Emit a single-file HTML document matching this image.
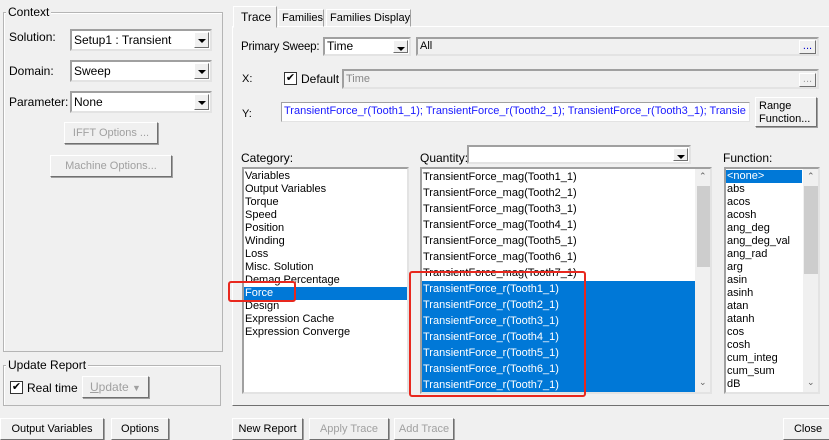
<!DOCTYPE html>
<html><head><style>
*{box-sizing:border-box}
body{margin:0;width:829px;height:429px;overflow:hidden;background:#f0f0f0;font-family:"Liberation Sans",sans-serif;font-size:11px;color:#000;position:relative}
.a{position:absolute;white-space:nowrap}
.grp{position:absolute;border:1px solid #b5b5b5;box-shadow:inset 1px 1px 0 #fff}
.lbl{position:absolute;background:#f0f0f0;padding:0 2px;white-space:nowrap}
.combo{position:absolute;background:#fff;border:2px solid;border-color:#a0a0a0 #e3e3e3 #e3e3e3 #a0a0a0;white-space:nowrap;padding-left:2px;line-height:18px;overflow:hidden}
.arr{position:absolute;right:1px;top:1px;bottom:1px;width:15px;background:#f0f0f0;border:1px solid;border-color:#fff #707070 #707070 #fff}
.arr:after{content:"";position:absolute;left:3px;top:6px;border-left:4px solid transparent;border-right:4px solid transparent;border-top:4px solid #000}
.btn{position:absolute;background:#f0f0f0;border:1px solid;border-color:#fff #707070 #707070 #fff;box-shadow:1px 1px 0 #a0a0a0;text-align:center;white-space:nowrap;line-height:20px}
.dis{color:#a0a0a0}
.list{position:absolute;background:#fff;border:2px solid;border-color:#a0a0a0 #e3e3e3 #e3e3e3 #a0a0a0;overflow:hidden;white-space:nowrap}
.row{height:13px;line-height:13px;padding-left:1px}
.qrow{height:16px;line-height:16px;padding-left:1px}
.sel{background:#0078d7;color:#fff}
.sb{position:absolute;background:#f0f0f0}
.red{position:absolute;border:2px solid #e8281e;border-radius:3px}
.chk{position:absolute;width:13px;height:13px;border:1px solid #333;background:#fff;font-size:11px;line-height:11px;text-align:center}
</style></head><body>
<div class="grp" style="left:3px;top:12px;width:220px;height:340px"></div>
<div class="lbl" style="left:6px;top:5px;font-size:12px">Context</div>
<div class="a" style="left:9px;top:30px;font-size:12px">Solution:</div>
<div class="combo" style="left:70px;top:29px;width:142px;height:22px;font-size:12px">Setup1 : Transient<div class="arr"></div></div>
<div class="a" style="left:9px;top:64px;font-size:12px">Domain:</div>
<div class="combo" style="left:70px;top:60px;width:142px;height:22px;font-size:12px">Sweep<div class="arr"></div></div>
<div class="a" style="left:9px;top:95px;font-size:12px">Parameter:</div>
<div class="combo" style="left:70px;top:91px;width:142px;height:22px;font-size:12px">None<div class="arr"></div></div>
<div class="btn dis" style="left:64px;top:122px;width:94px;height:22px">IFFT Options ...</div>
<div class="btn dis" style="left:50px;top:155px;width:122px;height:22px">Machine Options...</div>
<div class="grp" style="left:3px;top:365px;width:218px;height:41px"></div>
<div class="lbl" style="left:6px;top:358px;font-size:12px">Update Report</div>
<div class="chk" style="left:10px;top:381px">✔</div>
<div class="a" style="left:27px;top:381px;font-size:12px">Real time</div>
<div class="btn dis" style="left:82px;top:376px;width:67px;height:22px;text-align:left;padding-left:7px;font-size:12px"><u>U</u>pdate <span style="font-size:9px">▼</span></div>
<div class="btn" style="left:0px;top:418px;width:104px;height:22px">Output Variables</div>
<div class="btn" style="left:111px;top:418px;width:58px;height:22px">Options</div>
<div class="btn" style="left:232px;top:418px;width:71px;height:22px">New Report</div>
<div class="btn dis" style="left:309px;top:418px;width:80px;height:22px">Apply Trace</div>
<div class="btn dis" style="left:394px;top:418px;width:60px;height:22px">Add Trace</div>
<div class="btn" style="left:783px;top:418px;width:50px;height:22px">Close</div>
<div class="a" style="left:232px;top:26px;width:600px;height:380px;border:1px solid;border-color:#fff #a0a0a0 #707070 #fff"></div>
<div class="a" style="left:233px;top:6px;width:44px;height:22px;border:1px solid;border-color:#fff #a0a0a0 transparent #fff;background:#f0f0f0;padding:3px 0 0 7px;font-size:12px">Trace</div>
<div class="a" style="left:278px;top:9px;width:46px;height:18px;border:1px solid;border-color:#fff #a0a0a0 transparent #fff;padding:2px 0 0 3px">Families</div>
<div class="a" style="left:326px;top:9px;width:85px;height:18px;border:1px solid;border-color:#fff #a0a0a0 transparent #fff;padding:2px 0 0 3px">Families Display</div>
<div class="a" style="left:241px;top:41px;font-size:11.5px;letter-spacing:-0.2px">Primary Sweep:</div>
<div class="combo" style="left:323px;top:37px;width:88px;height:19px;line-height:15px;font-size:12px">Time<div class="arr"></div></div>
<div class="combo" style="left:416px;top:37px;width:403px;height:19px;line-height:15px;background:#f0f0f0">All<div class="btn" style="right:1px;top:1px;width:17px;height:14px;line-height:10px;color:#00c;box-shadow:none">...</div></div>
<div class="a" style="left:242px;top:73px">X:</div>
<div class="chk" style="left:284px;top:72px">✔</div>
<div class="a" style="left:301px;top:72px;font-size:12px">Default</div>
<div class="combo" style="left:342px;top:69px;width:477px;height:20px;line-height:16px;background:#f0f0f0;color:#888">Time<div class="btn dis" style="right:1px;top:2px;width:17px;height:14px;line-height:10px;box-shadow:none">...</div></div>
<div class="a" style="left:242px;top:108px">Y:</div>
<div class="combo" style="left:281px;top:102px;width:469px;height:20px;line-height:17px;color:#1a1aff;border-width:1px">TransientForce_r(Tooth1_1); TransientForce_r(Tooth2_1); TransientForce_r(Tooth3_1); Transie</div>
<div class="btn" style="left:755px;top:97px;width:62px;height:30px;line-height:13px;text-align:left;padding:2px 0 0 3px">Range<br>Function...</div>
<div class="a" style="left:241px;top:151px;font-size:12px">Category:</div>
<div class="list" style="left:242px;top:167px;width:167px;height:227px;padding-top:1px">
<div class="row">Variables</div><div class="row">Output Variables</div><div class="row">Torque</div><div class="row">Speed</div><div class="row">Position</div><div class="row">Winding</div><div class="row">Loss</div><div class="row">Misc. Solution</div><div class="row">Demag Percentage</div><div class="row sel">Force</div><div class="row">Design</div><div class="row">Expression Cache</div><div class="row">Expression Converge</div>
</div>
<div class="a" style="left:420px;top:151px;font-size:12px">Quantity:</div>
<div class="combo" style="left:467px;top:145px;width:224px;height:19px"><div class="arr"></div></div>
<div class="list" style="left:420px;top:167px;width:292px;height:227px">
<div class="qrow">TransientForce_mag(Tooth1_1)</div><div class="qrow">TransientForce_mag(Tooth2_1)</div><div class="qrow">TransientForce_mag(Tooth3_1)</div><div class="qrow">TransientForce_mag(Tooth4_1)</div><div class="qrow">TransientForce_mag(Tooth5_1)</div><div class="qrow">TransientForce_mag(Tooth6_1)</div><div class="qrow">TransientForce_mag(Tooth7_1)</div>
<div class="qrow sel" style="width:273px">TransientForce_r(Tooth1_1)</div><div class="qrow sel" style="width:273px">TransientForce_r(Tooth2_1)</div><div class="qrow sel" style="width:273px">TransientForce_r(Tooth3_1)</div><div class="qrow sel" style="width:273px">TransientForce_r(Tooth4_1)</div><div class="qrow sel" style="width:273px">TransientForce_r(Tooth5_1)</div><div class="qrow sel" style="width:273px">TransientForce_r(Tooth6_1)</div><div class="qrow sel" style="width:273px">TransientForce_r(Tooth7_1)</div>
<div class="sb" style="left:273px;top:0;width:17px;height:223px"><div class="a" style="left:2px;top:17px;width:13px;height:81px;background:#cdcdcd"></div><div class="a" style="left:4px;top:2px;color:#606060;font-size:9px">⌃</div><div class="a" style="left:4px;top:208px;color:#606060;font-size:9px">⌄</div></div>
</div>
<div class="a" style="left:723px;top:151px;font-size:12px">Function:</div>
<div class="list" style="left:724px;top:167px;width:96px;height:227px;padding-top:1px">
<div class="row sel" style="width:76px">&lt;none&gt;</div><div class="row">abs</div><div class="row">acos</div><div class="row">acosh</div><div class="row">ang_deg</div><div class="row">ang_deg_val</div><div class="row">ang_rad</div><div class="row">arg</div><div class="row">asin</div><div class="row">asinh</div><div class="row">atan</div><div class="row">atanh</div><div class="row">cos</div><div class="row">cosh</div><div class="row">cum_integ</div><div class="row">cum_sum</div><div class="row">dB</div><div class="row">dB10normalize</div>
<div class="sb" style="left:77px;top:0;width:17px;height:223px"><div class="a" style="left:1px;top:17px;width:15px;height:88px;background:#cdcdcd"></div><div class="a" style="left:4px;top:2px;color:#606060;font-size:9px">⌃</div><div class="a" style="left:4px;top:208px;color:#606060;font-size:9px">⌄</div></div>
</div>
<div class="red" style="left:228px;top:281px;width:68px;height:21px"></div>
<div class="red" style="left:409px;top:271px;width:177px;height:126px"></div>
</body></html>
